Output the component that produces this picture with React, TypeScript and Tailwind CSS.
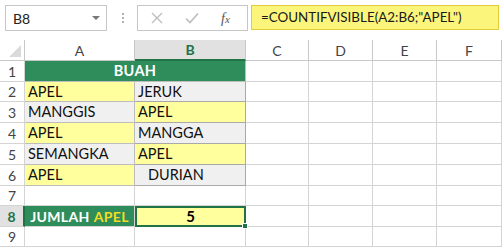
import React from 'react';

const font = { fontFamily: 'Lato, "Open Sans", sans-serif' };

const cols = ['A', 'B', 'C', 'D', 'E', 'F'];

type Cell = { text?: React.ReactNode; bg?: string; indent?: boolean };

const rows: { a: Cell; b: Cell }[] = [
  { a: { text: 'APEL', bg: 'bg-[#ffff9e]' }, b: { text: 'JERUK', bg: 'bg-[#f0f0f0]' } },
  { a: { text: 'MANGGIS', bg: 'bg-[#f0f0f0]' }, b: { text: 'APEL', bg: 'bg-[#ffff9e]' } },
  { a: { text: 'APEL', bg: 'bg-[#ffff9e]' }, b: { text: 'MANGGA', bg: 'bg-[#f0f0f0]' } },
  { a: { text: 'SEMANGKA', bg: 'bg-[#f0f0f0]' }, b: { text: 'APEL', bg: 'bg-[#ffff9e]' } },
  { a: { text: 'APEL', bg: 'bg-[#ffff9e]' }, b: { text: 'DURIAN', bg: 'bg-[#f0f0f0]', indent: true } },
];

const RowNum = ({ n, active }: { n: number; active?: boolean }) => (
  <div
    className={`flex items-center justify-center border-b border-r text-[14px] ${
      active
        ? 'bg-[#e1e1e1] border-b-[#d4d4d4] border-r-2 border-r-[#217346] font-bold text-[#217346]'
        : 'border-[#d4d4d4] bg-white text-[#444]'
    }`}
  >
    {n}
  </div>
);

const Empty = ({ count }: { count: number }) => (
  <>
    {Array.from({ length: count }).map((_, i) => (
      <div key={i} className="border-b border-r border-[#d4d4d4] bg-white" />
    ))}
  </>
);

export default function App() {
  return (
    <div className="h-[248px] w-[502px] overflow-hidden bg-white" style={font}>
      {/* formula bar strip */}
      <div className="flex h-[40px] items-start pt-[5px]">
        <div className="ml-[5px] flex h-[26px] w-[102px] items-center justify-between border border-[#c6c6c6] pl-[7px] pr-[6px] text-[14px] text-[#222]">
          <span>B8</span>
          <span className="h-0 w-0 border-x-[4px] border-t-[4px] border-x-transparent border-t-[#777]" />
        </div>
        <div className="ml-[15px] flex h-[26px] flex-col items-center justify-center gap-[2px]">
          <span className="h-[2px] w-[2px] bg-[#b0b0b0]" />
          <span className="h-[2px] w-[2px] bg-[#b0b0b0]" />
          <span className="h-[2px] w-[2px] bg-[#b0b0b0]" />
        </div>
        <div className="ml-[13px] flex h-[26px] w-[111px] items-center border border-[#c6c6c6]">
          <svg width="12" height="12" viewBox="0 0 12 12" className="ml-[13px]">
            <path d="M1 1L11 11M11 1L1 11" stroke="#bdbdbd" strokeWidth="1.3" fill="none" />
          </svg>
          <svg width="14" height="12" viewBox="0 0 14 12" className="ml-[22px]">
            <path d="M1 6.5L5 10.5L13 1.5" stroke="#bdbdbd" strokeWidth="1.6" fill="none" />
          </svg>
          <span
            className="ml-[22px] text-[14px] italic text-[#555]"
            style={{ fontFamily: '"Liberation Serif", serif' }}
          >
            f<span className="text-[11px]">x</span>
          </span>
        </div>
        <div className="ml-[3px] flex h-[25px] w-[248px] items-center border border-[#e3cc3a] bg-[#fbf57c] pl-[9px] text-[13.4px] text-[#1a1a1a]">
          =COUNTIFVISIBLE(A2:B6;"APEL")
        </div>
      </div>

      {/* sheet grid */}
      <div className="grid grid-cols-[25px_110px_111px_63px_64px_64px_65px] grid-rows-[21px_21px_20px_21px_21px_21px_21px_20px_21px_20px]">
        {/* corner */}
        <div className="relative border-b border-r border-[#c8c8c8] bg-white">
          <span className="absolute bottom-[3px] right-[3px] h-0 w-0 border-b-[12px] border-l-[12px] border-b-[#dadada] border-l-transparent" />
        </div>
        {cols.map((c) => (
          <div
            key={c}
            className={`flex items-center justify-center border-r text-[14px] ${
              c === 'B'
                ? 'border-b-2 border-b-[#217346] border-r-[#c8c8c8] bg-[#e1e1e1] font-bold text-[#217346]'
                : 'border-b border-[#c8c8c8] bg-white text-[#444]'
            }`}
          >
            {c}
          </div>
        ))}

        {/* row 1 */}
        <RowNum n={1} />
        <div className="col-span-2 flex items-center justify-center border-b border-r border-[#bdbdbd] bg-[#2f8d5c] text-[14.5px] font-bold tracking-wide text-white">
          BUAH
        </div>
        <Empty count={4} />

        {rows.map((r, i) => (
          <React.Fragment key={i}>
            <RowNum n={i + 2} />
            <div className={`flex items-center border-b border-r border-[#bdbdbd] pl-[3px] text-[14.5px] text-[#111] ${r.a.bg}`}>
              {r.a.text}
            </div>
            <div
              className={`flex items-center border-b border-r border-[#a9a9a9] text-[14.5px] text-[#111] ${r.b.bg} ${
                r.b.indent ? 'pl-[13px]' : 'pl-[3px]'
              }`}
            >
              {r.b.text}
            </div>
            <Empty count={4} />
          </React.Fragment>
        ))}

        {/* row 7 */}
        <RowNum n={7} />
        <Empty count={6} />

        {/* row 8 */}
        <RowNum n={8} active />
        <div className="flex items-center justify-center border-b border-r border-[#d4d4d4] bg-[#2f8d5c] text-[14px] font-bold tracking-wide">
          <span className="text-white">JUMLAH</span>
          <span className="ml-[4px] text-[#f1dc22]">APEL</span>
        </div>
        <div className="relative flex items-center justify-center border-2 border-[#217346] bg-[#ffff9e] text-[15px] font-bold text-black">
          5
          <span className="absolute -bottom-[4px] -right-[4px] h-[6px] w-[6px] border border-white bg-[#217346]" />
        </div>
        <Empty count={4} />

        {/* row 9 */}
        <RowNum n={9} />
        <Empty count={6} />
      </div>
    </div>
  );
}
